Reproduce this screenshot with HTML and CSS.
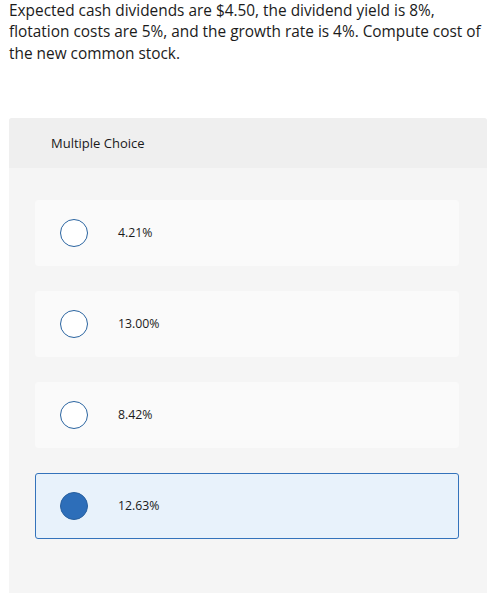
FILE: index.html
```html
<!DOCTYPE html>
<html>
<head>
<meta charset="utf-8">
<link rel="stylesheet" href="styles.css">
</head>
<body>
<div class="page">
  <p class="question">Expected cash dividends are $4.50, the dividend yield is 8%, flotation costs are 5%, and the growth rate is 4%. Compute cost of the new common stock.</p>
  <section class="panel">
    <div class="panel-head">Multiple Choice</div>
    <div class="choices">
      <div class="choice"><span class="radio"></span><span class="label">4.21%</span></div>
      <div class="choice"><span class="radio"></span><span class="label">13.00%</span></div>
      <div class="choice"><span class="radio"></span><span class="label">8.42%</span></div>
      <div class="choice selected"><span class="radio"></span><span class="label">12.63%</span></div>
    </div>
  </section>
</div>
</body>
</html>
```
FILE: styles.css
```css
html, body {
  margin: 0;
  padding: 0;
  background: #ffffff;
}
body {
  font-family: "Open Sans", "Liberation Sans", sans-serif;
  color: #1a1a1a;
}
.page {
  padding: 0 3px 0 9px;
}
.question {
  margin: 0;
  font-size: 15.4px;
  line-height: 21.3px;
  color: #1b1b1b;
}
.panel {
  margin-top: 54px;
  background: #f5f5f5;
  border-radius: 3px 3px 0 0;
  height: 480px;
}
.panel-head {
  height: 50px;
  background: #efefef;
  border-radius: 3px 3px 0 0;
  display: flex;
  align-items: center;
  padding-left: 42px;
  font-size: 13px;
  color: #1a1a1a;
}
.choices {
  display: flex;
  flex-direction: column;
  gap: 25px;
  padding: 32px 28px 0 26px;
}
.choice {
  height: 66px;
  box-sizing: border-box;
  background: #fafafa;
  border: 1px solid #fafafa;
  border-radius: 3px;
  display: flex;
  align-items: center;
  padding-left: 24px;
  gap: 30px;
}
.radio {
  width: 28px;
  height: 28px;
  box-sizing: border-box;
  border: 1.5px solid #2a64a0;
  border-radius: 50%;
  background: #ffffff;
  flex: none;
}
.label {
  font-size: 12.3px;
  color: #1a1a1a;
}
.choice.selected {
  background: #e8f2fb;
  border-color: #3473bb;
}
.choice.selected .radio {
  background: #2d6eb9;
  border-color: #275f9e;
}
```
